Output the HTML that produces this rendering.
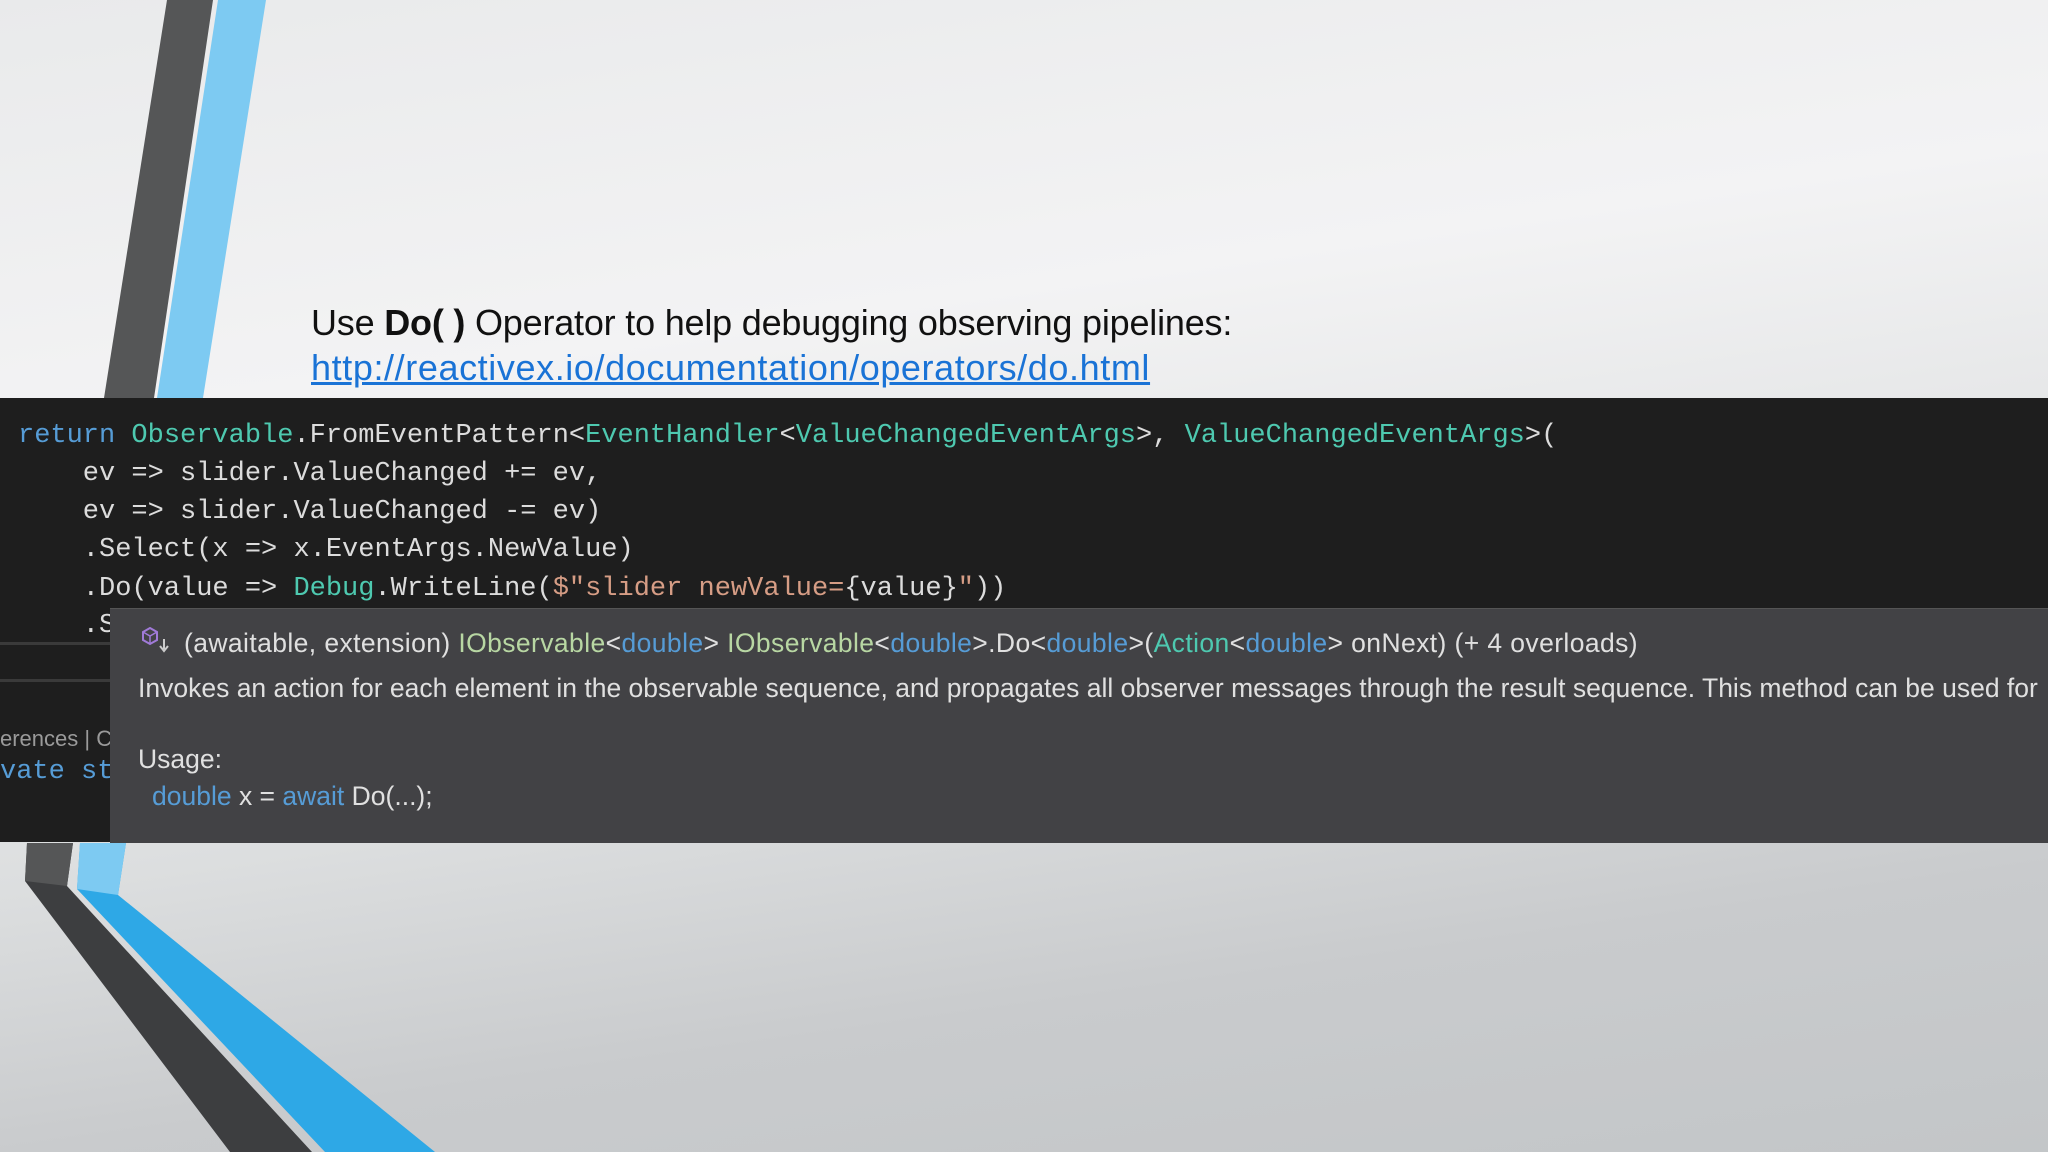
<!DOCTYPE html>
<html><head><meta charset="utf-8"><style>
html,body{margin:0;padding:0;width:2048px;height:1152px;overflow:hidden}
body{position:relative;background:linear-gradient(172deg,#e9eaeb 0%,#f3f3f4 30%,#dcdedf 62%,#c9cbcd 80%,#c3c6c8 100%);font-family:"Liberation Sans",sans-serif}
svg.bg{position:absolute;left:0;top:0}
.title{position:absolute;left:311px;top:302px;font-size:36px;color:#111;white-space:nowrap;letter-spacing:-0.2px}
.link{position:absolute;left:311px;top:347px;font-size:36px;color:#1a73d6;text-decoration:underline;white-space:nowrap;letter-spacing:0.6px}
.code{position:absolute;left:0;top:398px;width:2048px;height:444px;background:#1e1e1e;overflow:hidden}
.cl{position:absolute;left:18px;font-family:"Liberation Mono",monospace;font-size:27px;color:#dcdcdc;white-space:pre}
.k{color:#569cd6}.t{color:#4ec9b0}.s{color:#d69d85}
.tip{position:absolute;left:110px;top:608px;width:1938px;height:234px;background:#424245;border-top:1px solid #555;overflow:hidden;color:#e0e0e0;font-size:26.5px;white-space:nowrap}
.tip div{position:absolute}
.g{color:#b8d7a3}.b{color:#569cd6}.a{color:#4ec9b0}
.sep{position:absolute;left:0;width:110px;height:3px;background:#3a3a3a}
</style></head><body>
<svg class="bg" width="2048" height="1152">
<polygon points="167,0 213,0 154,398 104,398" fill="#555657"/>
<polygon points="218,0 266,0 203,398 157,398" fill="#7dcaf2"/>
<polygon points="27,843 73,843 67,886 312,1152 230,1152 25,881" fill="#3d3e40"/>
<polygon points="27,843 73,843 67,886 25,881" fill="#555657"/>
<polygon points="80,843 126,843 118,895 435,1152 325,1152 77,889" fill="#2ea8e6"/>
<polygon points="80,843 126,843 118,895 77,889" fill="#7dcaf2"/>
</svg>
<div class="title">Use <b>Do( )</b> Operator to help debugging observing pipelines:</div>
<div class="link">http://reactivex.io/documentation/operators/do.html</div>
<div class="code">
<div class="cl" style="top:23px"><span class="k">return</span> <span class="t">Observable</span>.FromEventPattern&lt;<span class="t">EventHandler</span>&lt;<span class="t">ValueChangedEventArgs</span>&gt;, <span class="t">ValueChangedEventArgs</span>&gt;(</div>
<div class="cl" style="top:61px">    ev =&gt; slider.ValueChanged += ev,</div>
<div class="cl" style="top:99px">    ev =&gt; slider.ValueChanged -= ev)</div>
<div class="cl" style="top:137px">    .Select(x =&gt; x.EventArgs.NewValue)</div>
<div class="cl" style="top:176px">    .Do(value =&gt; <span class="t">Debug</span>.WriteLine(<span class="s">$"slider newValue=</span>{value}<span class="s">"</span>))</div>
<div class="cl" style="top:213px">    .S</div>
<div class="sep" style="top:244px"></div>
<div class="sep" style="top:281px"></div>
<div style="position:absolute;left:0;top:328px;font-size:22px;color:#9a9a9a;white-space:nowrap">erences | C</div>
<div class="cl" style="left:0;top:359px;color:#569cd6">vate st</div>
</div>
<div class="tip">
<svg style="position:absolute;left:30px;top:18px" width="34" height="30"><polygon points="3,5 10,1 17,5 17,13 10,17 3,13" fill="none" stroke="#a07ad8" stroke-width="2"/><path d="M3,5 L10,9 L17,5 M10,9 L10,17" stroke="#a07ad8" stroke-width="1.5" fill="none"/><path d="M24,12 L24,22 M20,19 L24,24 L28,19" stroke="#ccc" stroke-width="2" fill="none"/></svg>
<div style="left:74px;top:19px;letter-spacing:0.4px">(awaitable, extension) <span class="g">IObservable</span>&lt;<span class="b">double</span>&gt; <span class="g">IObservable</span>&lt;<span class="b">double</span>&gt;.Do&lt;<span class="b">double</span>&gt;(<span class="a">Action</span>&lt;<span class="b">double</span>&gt; onNext) (+ 4 overloads)</div>
<div style="left:28px;top:64px">Invokes an action for each element in the observable sequence, and propagates all observer messages through the result sequence. This method can be used for</div>
<div style="left:28px;top:135px">Usage:</div>
<div style="left:42px;top:172px"><span class="b">double</span> x = <span class="b">await</span> Do(...);</div>
</div>
</body></html>
